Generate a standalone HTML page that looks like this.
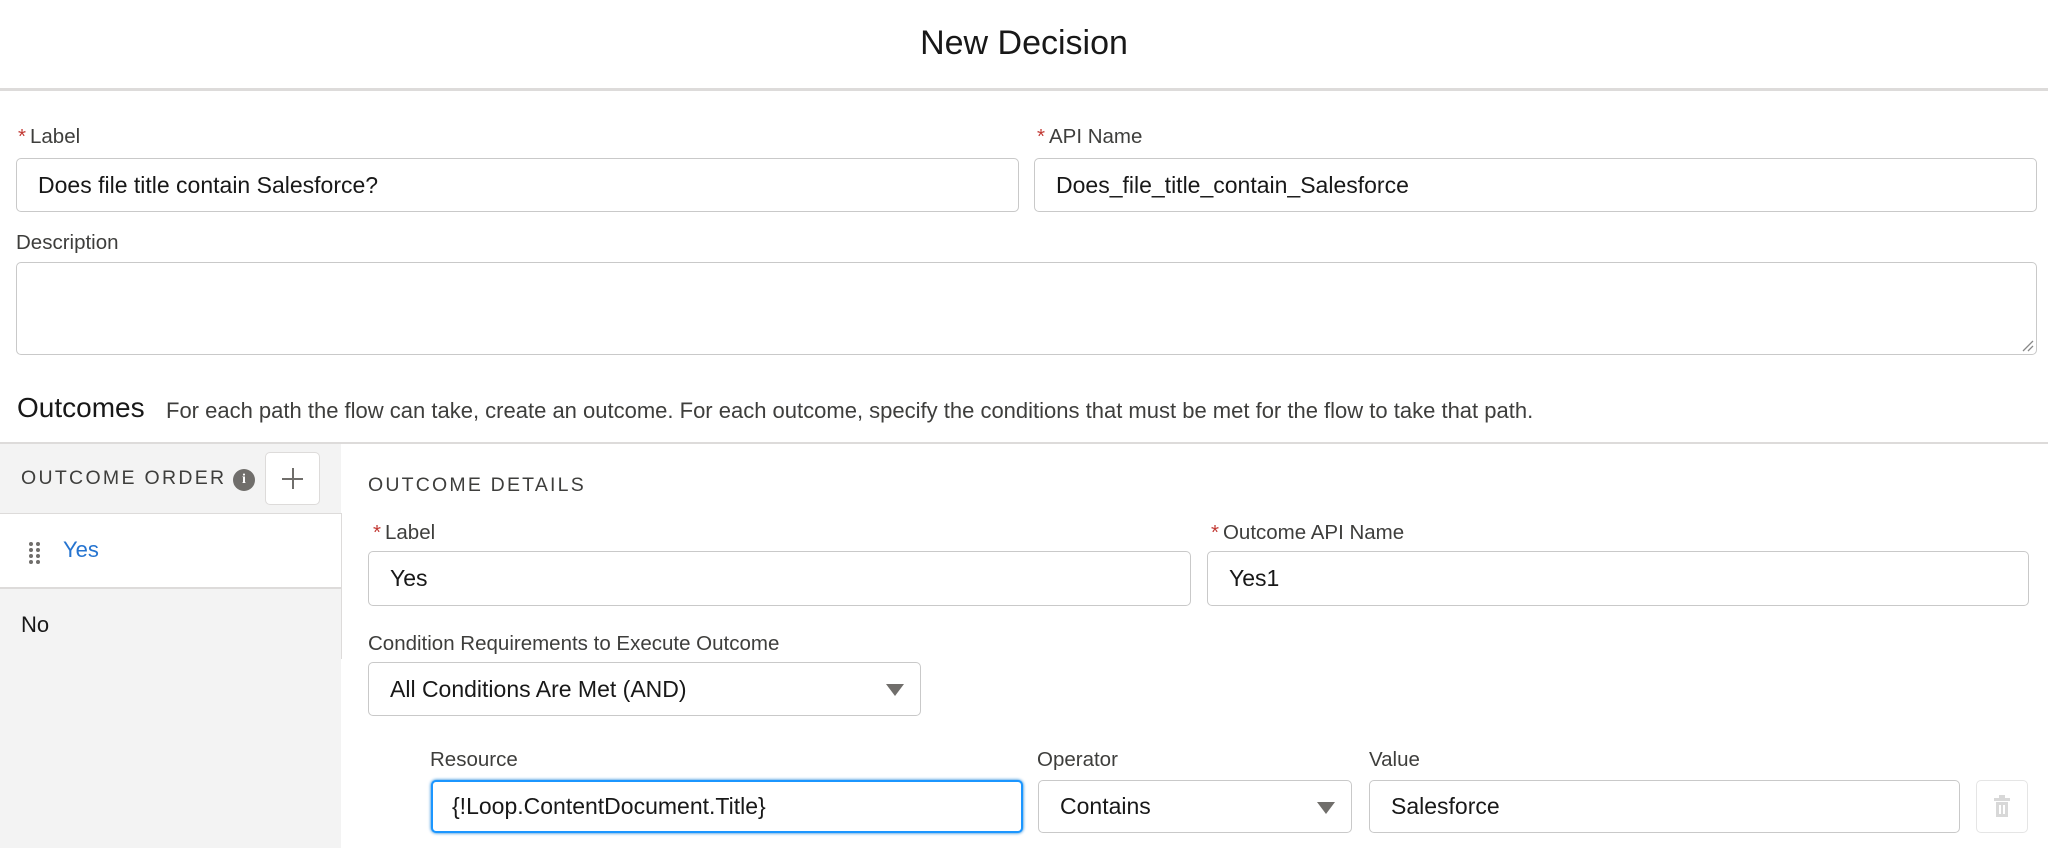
<!DOCTYPE html>
<html><head><style>
*{box-sizing:border-box;margin:0;padding:0}
body{width:2048px;height:848px;overflow:hidden;background:#fff;font-family:"Liberation Sans",sans-serif;color:#181818;position:relative}
.a{position:absolute}
.lbl{position:absolute;font-size:20.5px;color:#3e3e3c;white-space:nowrap}
.lbl b{color:#c23934;font-weight:normal;margin-right:4px}
.inp{position:absolute;border:1px solid #c9c9c9;border-radius:5px;background:#fff;font-size:23px;padding-left:21px;display:flex;align-items:center;white-space:nowrap}
.tri{position:absolute;right:16px;top:50%;margin-top:-5px;width:0;height:0;border-left:9px solid transparent;border-right:9px solid transparent;border-top:12px solid #706e6b}
</style></head><body>
<div class="a" style="left:0;top:0;width:2048px;height:91px;border-bottom:3px solid #dddbda;text-align:center;font-size:34px;line-height:86px">New Decision</div>

<div class="lbl" style="left:18px;top:125px"><b>*</b>Label</div>
<div class="inp" style="left:16px;top:158px;width:1003px;height:54px">Does file title contain Salesforce?</div>
<div class="lbl" style="left:1037px;top:125px"><b>*</b>API Name</div>
<div class="inp" style="left:1034px;top:158px;width:1003px;height:54px">Does_file_title_contain_Salesforce</div>
<div class="lbl" style="left:16px;top:231px">Description</div>
<div class="inp" style="left:16px;top:262px;width:2021px;height:93px"></div>
<svg class="a" style="left:2020px;top:340px" width="14" height="12"><path d="M3 11L13 1M8 11L13 6" stroke="#888" stroke-width="1.3"/></svg>

<div class="a" style="left:17px;top:392px;font-size:28px">Outcomes</div>
<div class="a" style="left:166px;top:398px;font-size:22px;color:#3e3e3c;white-space:nowrap">For each path the flow can take, create an outcome. For each outcome, specify the conditions that must be met for the flow to take that path.</div>
<div class="a" style="left:0;top:442px;width:2048px;height:2px;background:#dddbda"></div>

<div class="a" style="left:0;top:444px;width:341px;height:404px;background:#f3f3f3"></div>
<div class="a" style="left:21px;top:467px;font-size:19.5px;letter-spacing:2.3px;color:#3e3e3c">OUTCOME ORDER</div>
<div class="a" style="left:233px;top:469px;width:22px;height:22px;border-radius:50%;background:#706e6b;color:#fff;font-size:14px;font-weight:bold;text-align:center;line-height:22px;font-family:'Liberation Serif',serif">i</div>
<div class="a" style="left:265px;top:452px;width:55px;height:53px;border:1px solid #dddbda;border-radius:5px;background:#fff"><div class="a" style="left:16px;top:25px;width:21px;height:2px;background:#706e6b"></div><div class="a" style="left:26px;top:15px;width:2px;height:21px;background:#706e6b"></div></div>
<div class="a" style="left:0;top:513px;width:342px;height:76px;background:#fff;border-top:1px solid #dddbda;border-bottom:2px solid #dddbda;border-right:1px solid #dddbda"></div>
<svg class="a" style="left:28px;top:541px" width="14" height="24"><g fill="#706e6b"><circle cx="3" cy="3" r="2"/><circle cx="10" cy="3" r="2"/><circle cx="3" cy="9" r="2"/><circle cx="10" cy="9" r="2"/><circle cx="3" cy="15" r="2"/><circle cx="10" cy="15" r="2"/><circle cx="3" cy="21" r="2"/><circle cx="10" cy="21" r="2"/></g></svg>
<div class="a" style="left:63px;top:537px;font-size:22px;color:#2574d0">Yes</div>
<div class="a" style="left:341px;top:589px;width:1px;height:70px;background:#dddbda"></div>
<div class="a" style="left:21px;top:612px;font-size:22px">No</div>

<div class="a" style="left:368px;top:474px;font-size:19.5px;letter-spacing:2.2px;color:#3e3e3c">OUTCOME DETAILS</div>
<div class="lbl" style="left:373px;top:521px"><b>*</b>Label</div>
<div class="inp" style="left:368px;top:551px;width:823px;height:55px">Yes</div>
<div class="lbl" style="left:1211px;top:521px"><b>*</b>Outcome API Name</div>
<div class="inp" style="left:1207px;top:551px;width:822px;height:55px">Yes1</div>
<div class="lbl" style="left:368px;top:632px">Condition Requirements to Execute Outcome</div>
<div class="inp" style="left:368px;top:662px;width:553px;height:54px">All Conditions Are Met (AND)<div class="tri"></div></div>

<div class="lbl" style="left:430px;top:748px">Resource</div>
<div class="inp" style="left:431px;top:780px;width:592px;height:53px;border:2px solid #1b96ff;box-shadow:0 0 3px #0176d3;padding-left:19px">{!Loop.ContentDocument.Title}</div>
<div class="lbl" style="left:1037px;top:748px">Operator</div>
<div class="inp" style="left:1038px;top:780px;width:314px;height:53px">Contains<div class="tri"></div></div>
<div class="lbl" style="left:1369px;top:748px">Value</div>
<div class="inp" style="left:1369px;top:780px;width:591px;height:53px">Salesforce</div>
<div class="a" style="left:1976px;top:780px;width:52px;height:53px;border:1px solid #e5e5e5;border-radius:5px;background:#fff"></div>
<svg class="a" style="left:1993px;top:795px" width="18" height="22"><g fill="#d8d8d8"><rect x="6" y="0" width="6" height="3"/><rect x="1" y="3" width="16" height="3"/><path d="M3 7h12v15H3z"/></g><g fill="#fff"><rect x="6" y="10" width="2" height="9"/><rect x="10" y="10" width="2" height="9"/></g></svg>
</body></html>
